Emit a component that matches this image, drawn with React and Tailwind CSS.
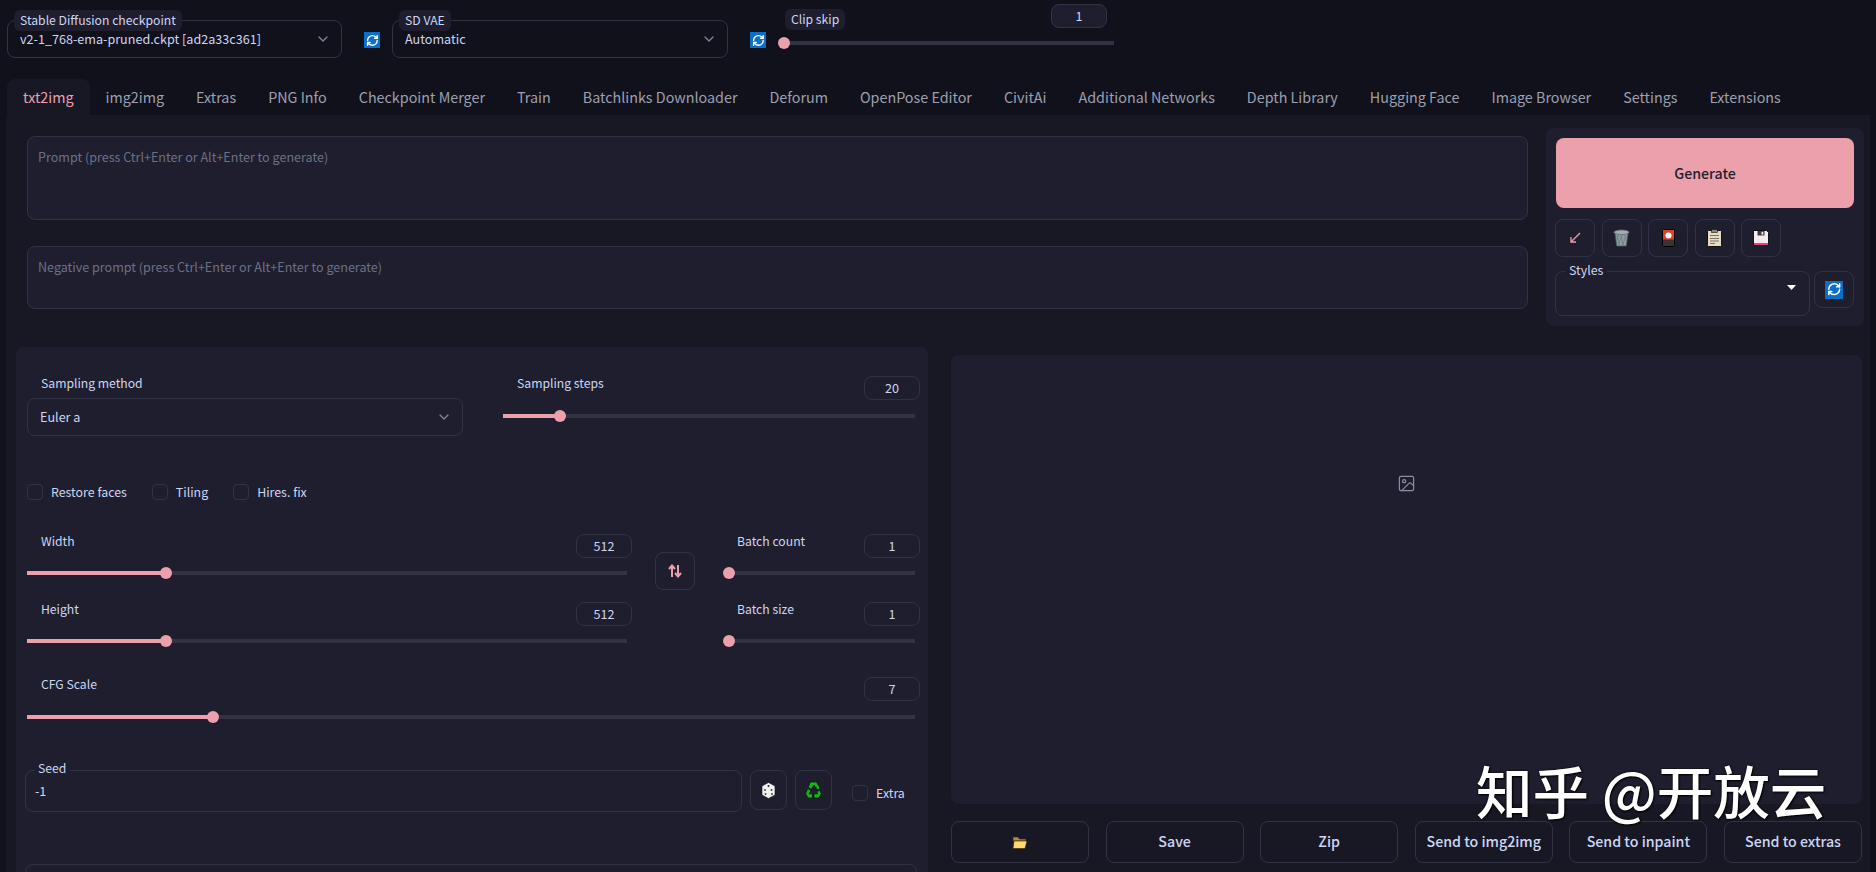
import React from 'react'
import { ChevronDown, Image as ImageIcon, RefreshCw } from 'lucide-react'

const tabs = [
  'txt2img', 'img2img', 'Extras', 'PNG Info', 'Checkpoint Merger', 'Train', 'Batchlinks Downloader',
  'Deforum', 'OpenPose Editor', 'CivitAi', 'Additional Networks', 'Depth Library', 'Hugging Face',
  'Image Browser', 'Settings', 'Extensions',
]

function RefreshIcon({ className }) {
  return (
    <span className={`flex items-center justify-center bg-[#0b6fc7] ${className}`}>
      <RefreshCw className="h-[80%] w-[80%] text-white" strokeWidth={2.6} />
    </span>
  )
}

function ArrowIcon() {
  return (
    <svg width="12" height="12" viewBox="0 0 12 12" fill="none" stroke="#eba0ac" strokeWidth="1.3">
      <path d="M11 1 2 10" />
      <path d="M2 5v5h5" />
    </svg>
  )
}

function TrashIcon() {
  return (
    <svg width="17" height="18" viewBox="0 0 18 19">
      <path d="M2 4h14l-2 14H4z" fill="#8f9ca2" stroke="#4c5a60" strokeWidth="0.8" />
      <ellipse cx="9" cy="3.4" rx="8" ry="2.4" fill="#a3aeb3" stroke="#5d6a70" strokeWidth="0.8" />
      <path d="M4 7l3 10M8 6l3 11M12 6l2 5M14 7l-4 10M10 6l-4 10M6 6l-2 5" stroke="#636f75" strokeWidth="0.6" />
    </svg>
  )
}

function CardIcon() {
  return (
    <svg width="13" height="18" viewBox="0 0 13 18">
      <rect x="0.5" y="0.5" width="12" height="17" rx="1" fill="#d9442a" stroke="#000" />
      <rect x="1" y="10.5" width="11" height="6.5" fill="#3b3236" />
      <circle cx="6.5" cy="6.5" r="3" fill="#fff" />
    </svg>
  )
}

function ClipboardIcon() {
  return (
    <svg width="15" height="18" viewBox="0 0 15 18">
      <rect x="0.5" y="1.5" width="14" height="16" rx="1" fill="#e8dcc3" stroke="#111" />
      <rect x="4.5" y="0.5" width="6" height="3" fill="#8d8577" stroke="#111" strokeWidth="0.6" />
      <path d="M3 6.5h9M3 9.5h9M3 12h9M3 14.5h5" stroke="#77726a" strokeWidth="1.2" />
    </svg>
  )
}

function SaveIcon() {
  return (
    <svg width="16" height="16" viewBox="0 0 16 16">
      <path d="M0.5 0.5h13l2 2v13H0.5z" fill="#f4eef0" stroke="#111" />
      <rect x="1" y="13" width="14" height="2" fill="#e0457b" />
      <rect x="4.5" y="1" width="7" height="4.5" fill="#3a3a40" />
      <rect x="8.5" y="1.8" width="1.8" height="2.8" fill="#eee" />
      <rect x="3.5" y="8" width="9" height="5" fill="#fae6ed" />
    </svg>
  )
}

function DiceIcon() {
  return (
    <svg width="15" height="17" viewBox="0 0 15 17">
      <path d="M7.5 0.5 14 4v9l-6.5 3.5L1 13V4z" fill="#f2f2f2" stroke="#111" strokeWidth="0.6" />
      <circle cx="7.5" cy="4" r="1" fill="#222" />
      <circle cx="4" cy="8" r="0.9" fill="#333" />
      <circle cx="4.5" cy="12" r="0.9" fill="#333" />
      <circle cx="10.5" cy="8" r="0.9" fill="#333" />
      <circle cx="11" cy="12" r="0.9" fill="#333" />
    </svg>
  )
}

function RecycleIcon() {
  return (
    <svg width="17" height="18" viewBox="0 0 17 18">
      <path d="M5.5 1h6l2.6 4.6 1 -0.6-0.8 4-3.8-1.2 1-.6L9 4l-2.6 4.2L3 6.2z" fill="#1fae1f" stroke="#021" strokeWidth="0.8" />
      <path d="M2.8 7.6 6 9.6l-2 3.2h3.4V17H3L0.6 12.4z" fill="#1fae1f" stroke="#021" strokeWidth="0.8" />
      <path d="M9 12.8h3.6l-1-2 3-1.6 1.8 3.4L14 17H9z" fill="#1fae1f" stroke="#021" strokeWidth="0.8" />
    </svg>
  )
}

function FolderIcon() {
  return (
    <svg width="16" height="13" viewBox="0 0 16 13">
      <path d="M1 1h5l1.5 2H14v2H1z" fill="#b98a35" stroke="#2a2013" strokeWidth="0.6" />
      <path d="M2 5h13l-2 7.5H1z" fill="#ffd86f" stroke="#2a2013" strokeWidth="0.6" />
    </svg>
  )
}

function IconBtn({ className, children }) {
  return (
    <button className={`flex items-center justify-center rounded-lg border border-[#313244] ${className}`}>
      {children}
    </button>
  )
}

function Track({ value }) {
  return (
    <div className="relative h-1 bg-[#313244]">
      <div className="h-1 bg-[#eba0ac]" style={{ width: `${value}%` }} />
      <div
        className="absolute top-[-4px] ml-[-6px] h-3 w-3 rounded-full bg-[#eba0ac]"
        style={{ left: `${value}%` }}
      />
    </div>
  )
}

function NumBox({ children, className = '' }) {
  return (
    <div className={`flex h-6 w-14 items-center justify-center rounded-lg border border-[#313244] text-[12.6px] text-[#cdd6f4] ${className}`}>
      {children}
    </div>
  )
}

function SliderField({ label, num, value, pad = 'pl-[14px]', trackClass = 'mt-[14px] pr-[5px]', className = '' }) {
  return (
    <div className={className}>
      <div className="flex h-6 justify-between">
        <span className={`mt-[-2px] text-[12.2px] leading-[18px] text-[#cdd6f4] ${pad}`}>{label}</span>
        <NumBox>{num}</NumBox>
      </div>
      <div className={trackClass}>
        <Track value={value} />
      </div>
    </div>
  )
}

function TopSelect({ label, value, className }) {
  return (
    <div className={`relative mt-4 flex h-[38px] items-center justify-between rounded-lg border border-[#313244] pl-[12px] pr-[10px] ${className}`}>
      <span className="absolute left-[6px] top-[-11px] rounded-md bg-[#1e1e2e] px-[6px] text-[12.2px] leading-[21px] text-[#cdd6f4]">
        {label}
      </span>
      <span className="text-[12.6px] text-[#cdd6f4]">{value}</span>
      <ChevronDown className="h-4 w-4 text-[#7f849c]" />
    </div>
  )
}

function Check({ label, className = '' }) {
  return (
    <label className={`flex h-4 items-center gap-2 text-[12.4px] text-[#cdd6f4] ${className}`}>
      <span className="h-4 w-4 rounded-[4px] border border-[#313244]" />
      {label}
    </label>
  )
}

export default function App() {
  return (
    <div className="relative flex h-[872px] w-[1876px] flex-col overflow-hidden bg-[#11111b] font-['Noto_Sans_CJK_SC',sans-serif]">
      <div className="flex h-[79px] shrink-0 items-start pl-[7px] pt-1">
        <TopSelect label="Stable Diffusion checkpoint" value="v2-1_768-ema-pruned.ckpt [ad2a33c361]" className="w-[335px]" />
        <RefreshIcon className="ml-[22px] mt-7 h-4 w-4" />
        <TopSelect label="SD VAE" value="Automatic" className="ml-3 w-[336px]" />
        <RefreshIcon className="ml-[22px] mt-7 h-4 w-4" />
        <div className="ml-3 w-[336px]">
          <div className="flex h-6 justify-between pl-[7px] pr-[7px]">
            <span className="mt-[5px] h-[21px] rounded-md bg-[#1e1e2e] px-[6px] text-[12.2px] leading-[21px] text-[#cdd6f4]">Clip skip</span>
            <NumBox className="bg-[#1e1e2e]">1</NumBox>
          </div>
          <div className="mt-[13px] pl-[6px]">
            <Track value={0} />
          </div>
        </div>
      </div>

      <div className="flex h-9 shrink-0 pl-[7px]">
        {tabs.map((tab, i) => (
          <div
            key={tab}
            className={`flex items-center whitespace-nowrap rounded-t-lg px-4 text-[14.33px] ${i === 0 ? 'bg-[#181825] text-[#eba0ac]' : 'text-[#9ca0b0]'}`}
          >
            {tab}
          </div>
        ))}
      </div>

      <div className="mx-[6px] min-h-0 flex-1 overflow-hidden bg-[#181825]">
        <div className="flex pl-[21px] pt-[13px]">
          <div className="w-[1501px] pt-2">
            <div className="h-[84px] rounded-lg border border-[#313244] bg-[#1e1e2e] px-[10px] pt-[11px] text-[12.55px] text-[#6c7086]">
              Prompt (press Ctrl+Enter or Alt+Enter to generate)
            </div>
            <div className="mt-[26px] h-[63px] rounded-lg border border-[#313244] bg-[#1e1e2e] px-[10px] pt-[11px] text-[12.55px] text-[#6c7086]">
              Negative prompt (press Ctrl+Enter or Alt+Enter to generate)
            </div>
          </div>
          <div className="ml-[18px] h-[198px] w-[318px] rounded-lg bg-[#1e1e2e] px-[10px] pt-[10px]">
            <button className="flex h-[70px] w-[298px] items-center justify-center rounded-lg bg-[#eba0ac] pt-[1px] text-[14.2px] font-medium text-[#1e1e2e]">
              Generate
            </button>
            <div className="ml-[-1px] mt-[11px] flex gap-[6.5px]">
              <IconBtn className="h-[38px] w-10"><ArrowIcon /></IconBtn>
              <IconBtn className="h-[38px] w-10"><TrashIcon /></IconBtn>
              <IconBtn className="h-[38px] w-10"><CardIcon /></IconBtn>
              <IconBtn className="h-[38px] w-10"><ClipboardIcon /></IconBtn>
              <IconBtn className="h-[38px] w-10"><SaveIcon /></IconBtn>
            </div>
            <div className="ml-[-1px] mt-[14px] flex items-start gap-1">
              <div className="relative h-[45px] w-[256px] rounded-lg border border-[#313244]">
                <span className="absolute left-[9px] top-[-12px] bg-[#1e1e2e] px-[4px] text-[12.4px] leading-[21px] text-[#cdd6f4]">Styles</span>
                <svg className="absolute right-[13px] top-[13px]" width="9" height="5" viewBox="0 0 9 5">
                  <path d="M0 0h9L4.5 5z" fill="#fff" />
                </svg>
              </div>
              <IconBtn className="h-[37px] w-10">
                <RefreshIcon className="h-[18px] w-[18px]" />
              </IconBtn>
            </div>
          </div>
        </div>

        <div className="mt-[21px] flex gap-[23px] pl-[10px]">
          <div className="h-[600px] w-[912px] rounded-lg bg-[#1e1e2e] pl-[11px] pr-2 pt-[29px]">
            <div className="flex">
              <div className="w-[436px]">
                <div className="ml-[14px] mt-[-2px] h-[24px] text-[12.2px] leading-[18px] text-[#cdd6f4]">Sampling method</div>
                <div className="flex h-[38px] items-center justify-between rounded-lg border border-[#313244] pl-3 pr-[10px]">
                  <span className="text-[12.6px] text-[#cdd6f4]">Euler a</span>
                  <ChevronDown className="h-4 w-4 text-[#7f849c]" />
                </div>
              </div>
              <SliderField label="Sampling steps" num="20" value={13.8} className="ml-[40px] flex-1" />
            </div>

            <div className="mt-[48px] flex">
              <Check label="Restore faces" />
              <Check label="Tiling" className="ml-[25px]" />
              <Check label="Hires. fix" className="ml-[25px]" />
            </div>

            <div className="mt-[34px] flex">
              <div className="w-[605px]">
                <SliderField label="Width" num="512" value={23.2} trackClass="mt-[13px] pr-[5px]" />
                <SliderField label="Height" num="512" value={23.2} trackClass="mt-[13px] pr-[5px]" className="mt-[27px]" />
              </div>
              <IconBtn className="ml-[23px] mt-[18px] h-[38px] w-10">
                <svg width="14" height="14" viewBox="0 0 14 14" fill="none" stroke="#eba0ac" strokeWidth="2">
                  <path d="M4 13V2M1 5l3-3.5L7 5" />
                  <path d="M10 1v11M7 9l3 3.5L13 9" />
                </svg>
              </IconBtn>
              <div className="ml-[34px] flex-1">
                <SliderField label="Batch count" num="1" value={0} pad="pl-2" trackClass="mt-[13px] pr-[5px]" />
                <SliderField label="Batch size" num="1" value={0} pad="pl-2" trackClass="mt-[13px] pr-[5px]" className="mt-[27px]" />
              </div>
            </div>

            <SliderField label="CFG Scale" num="7" value={21} className="mt-[34px]" />

            <div className="ml-[-2px] mt-[51px] flex items-start">
              <div className="relative flex h-[42px] w-[717px] items-center rounded-lg border border-[#313244] pl-[9px] text-[12.6px] text-[#cdd6f4]">
                <span className="absolute left-[8px] top-[-13px] bg-[#1e1e2e] px-[4px] text-[12.2px] leading-[21px]">Seed</span>
                <span className="mt-[1px]">-1</span>
              </div>
              <IconBtn className="ml-2 h-10 w-[37px]"><DiceIcon /></IconBtn>
              <IconBtn className="ml-2 h-10 w-[37px]"><RecycleIcon /></IconBtn>
              <Check label="Extra" className="ml-5 mt-[15px]" />
            </div>

            <div className="ml-[-2px] mt-[52px] h-20 w-[892px] rounded-lg border border-[#313244]" />
          </div>

          <div className="w-[911px] pt-2">
            <div className="flex h-[449px] items-start justify-center rounded-lg bg-[#1e1e2e] pt-[119px]">
              <ImageIcon className="h-[19px] w-[19px] text-[#8b8fa3]" strokeWidth={1.5} />
            </div>
            <div className="mt-[17px] flex justify-between">
              {[<FolderIcon key="f" />, 'Save', 'Zip', 'Send to img2img', 'Send to inpaint', 'Send to extras'].map((item, i) => (
                <button
                  key={i}
                  className="flex h-[42px] w-[138px] items-center justify-center rounded-lg border border-[#313244] text-[14.2px] font-medium text-[#cdd6f4]"
                >
                  {item}
                </button>
              ))}
            </div>
          </div>
        </div>
      </div>

      <div className="absolute left-[1476px] top-[751px] text-[56.5px] font-medium leading-[76px] text-white [text-shadow:1px_1px_2px_#000,0_0_2px_#000]">
        知乎 @开放云
      </div>
    </div>
  )
}
